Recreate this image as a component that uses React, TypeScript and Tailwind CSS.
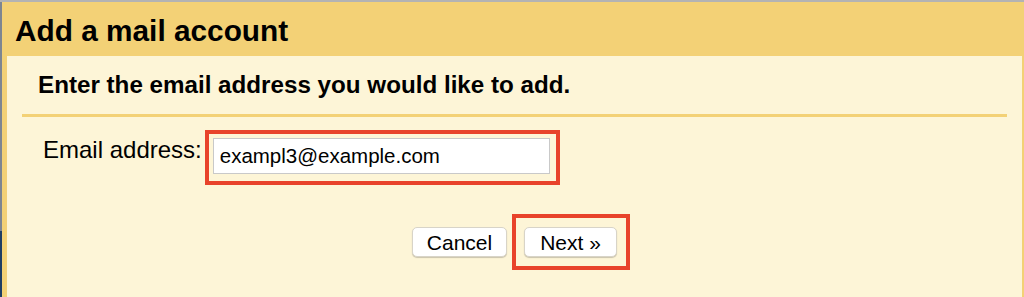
import React from 'react';

const font = { fontFamily: '"Liberation Sans", Arial, sans-serif' };

export default function App() {
  return (
    <div className="w-[1024px] h-[297px] flex flex-col overflow-hidden" style={font}>
      <div className="h-[2px] bg-[#b3b3b3]" />
      <div className="flex flex-1">
        <div className="w-[2px] flex flex-col">
          <div className="h-[229px] bg-[#7d8591]" />
          <div className="flex-1 bg-[#1e3d63]" />
        </div>
        <div className="flex-1 flex flex-col bg-[#f3d176]">
          <div className="h-[54px] pl-[13px] pt-[14px]">
            <h1 className="text-[29.8px] font-bold text-black leading-none">Add a mail account</h1>
          </div>
          <div className="flex-1 ml-[5px] mr-[2px] bg-[#fdf5d7] flex flex-col">
            <div className="mx-[15px] border-b-[3px] border-[#f3d176] pt-[17px] pb-[17px] pl-[16px]">
              <h2 className="text-[24.2px] font-bold text-black leading-none">
                Enter the email address you would like to add.
              </h2>
            </div>
            <div className="flex items-start pl-[36px] pt-[21px]">
              <label className="text-[24px] text-black leading-none mr-[11px]">Email address:</label>
              <div className="relative">
                <span className="absolute -left-[8px] -right-[10px] -top-[8px] -bottom-[11px] border-4 border-[#e8432b] pointer-events-none" />
                <input
                  type="text"
                  defaultValue="exampl3@example.com"
                  className="block w-[337px] h-[36px] bg-white border border-[#c9c9c9] px-[6px] text-[20.5px] text-black outline-none"
                  style={font}
                />
              </div>
            </div>
            <div className="flex justify-center gap-[17px] pt-[53px]">
              <button
                className="w-[95px] h-[30px] bg-white rounded-[5px] border border-[#d8d4c8] shadow-[0_1px_1px_rgba(0,0,0,0.2)] text-[21px] text-black leading-none"
                style={font}
              >
                Cancel
              </button>
              <div className="relative">
                <span className="absolute -left-[12px] -right-[13px] -top-[13px] -bottom-[13px] border-4 border-[#e8432b] pointer-events-none" />
                <button
                  className="w-[93px] h-[30px] bg-white rounded-[5px] border border-[#d8d4c8] shadow-[0_1px_1px_rgba(0,0,0,0.2)] text-[21px] text-black leading-none"
                  style={font}
                >
                  Next »
                </button>
              </div>
            </div>
          </div>
        </div>
      </div>
    </div>
  );
}
